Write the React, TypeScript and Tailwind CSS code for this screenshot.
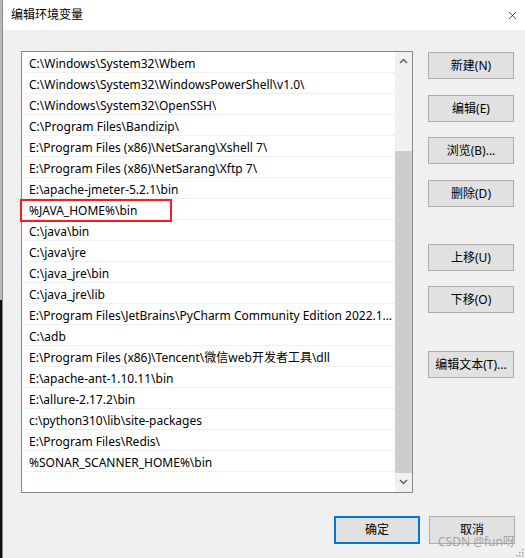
import { X } from 'lucide-react'

const paths = [
  'C:\\Windows\\System32\\Wbem',
  'C:\\Windows\\System32\\WindowsPowerShell\\v1.0\\',
  'C:\\Windows\\System32\\OpenSSH\\',
  'C:\\Program Files\\Bandizip\\',
  'E:\\Program Files (x86)\\NetSarang\\Xshell 7\\',
  'E:\\Program Files (x86)\\NetSarang\\Xftp 7\\',
  'E:\\apache-jmeter-5.2.1\\bin',
  '%JAVA_HOME%\\bin',
  'C:\\java\\bin',
  'C:\\java\\jre',
  'C:\\java_jre\\bin',
  'C:\\java_jre\\lib',
  'E:\\Program Files\\JetBrains\\PyCharm Community Edition 2022.1\\bin',
  'C:\\adb',
  'E:\\Program Files (x86)\\Tencent\\微信web开发者工具\\dll',
  'E:\\apache-ant-1.10.11\\bin',
  'E:\\allure-2.17.2\\bin',
  'c:\\python310\\lib\\site-packages',
  'E:\\Program Files\\Redis\\',
  '%SONAR_SCANNER_HOME%\\bin',
]

const font = 'font-["Noto_Sans","Noto_Sans_CJK_SC",sans-serif]'

function Btn({ label, className = '' }: { label: string; className?: string }) {
  return (
    <div
      className={`flex h-[27px] w-[86px] items-center justify-center border border-[#adadad] bg-[#e1e1e1] text-[12px] text-black ${className}`}
    >
      {label}
    </div>
  )
}

export default function App() {
  return (
    <div className={`relative flex h-[558px] w-[525px] overflow-hidden ${font}`}>
      {/* background behind the dialog */}
      <div className="flex w-[2px] flex-col">
        <div className="h-[300px] bg-[#b8b8b8]" />
        <div className="flex-1 bg-[#111]" />
      </div>

      <div className="flex flex-1 flex-col border-l border-[#8a8a8a] bg-[#f0f0f0]">
        <div className="flex h-[30px] items-center justify-between bg-white pl-[8px] pr-[6px]">
          <span className="text-[12px] text-black">编辑环境变量</span>
          <X size={13} strokeWidth={1.2} className="text-black" />
        </div>

        <div className="flex gap-[15px] pl-[18px] pt-[21px]">
          {/* list */}
          <div className="flex h-[442px] w-[392px] border border-[#828790] bg-white">
            <div className="flex w-[373px] flex-col">
              {paths.map((p) => (
                <div
                  key={p}
                  className="flex h-[21px] shrink-0 items-center border-b border-[#f0f0f0] pl-[7px] pr-[2px] text-[12px] text-black"
                >
                  <span className="truncate pt-[2px] leading-[19px]">{p}</span>
                </div>
              ))}
            </div>
            <div className="flex w-[17px] flex-col bg-[#f0f0f0]">
              <div className="flex h-[17px] items-center justify-center">
                <svg width="9" height="6" viewBox="0 0 9 6">
                  <path d="M1 5 L4.5 1.5 L8 5" fill="none" stroke="#606060" strokeWidth="1.5" />
                </svg>
              </div>
              <div className="h-[82px]" />
              <div className="h-[322px] bg-[#cdcdcd]" />
              <div className="flex h-[17px] items-center justify-center">
                <svg width="9" height="6" viewBox="0 0 9 6">
                  <path d="M1 1 L4.5 4.5 L8 1" fill="none" stroke="#606060" strokeWidth="1.5" />
                </svg>
              </div>
            </div>
          </div>

          {/* side buttons */}
          <div className="flex flex-col pt-px">
            <Btn label="新建(N)" />
            <Btn label="编辑(E)" className="mt-[16px]" />
            <Btn label="浏览(B)..." className="mt-[15px]" />
            <Btn label="删除(D)" className="mt-[16px]" />
            <Btn label="上移(U)" className="mt-[37px]" />
            <Btn label="下移(O)" className="mt-[15px]" />
            <Btn label="编辑文本(T)..." className="mt-[38px]" />
          </div>
        </div>

        <div className="flex justify-end gap-[9px] pr-[10px] pt-[23px]">
          <div className="flex h-[28px] w-[86px] items-center justify-center border-2 border-[#0078d7] bg-[#e1e1e1] text-[12px] text-black">
            确定
          </div>
          <Btn label="取消" className="h-[28px]" />
        </div>
      </div>

      {/* annotation */}
      <div className="absolute left-[20px] top-[199px] h-[23px] w-[152px] border-2 border-[#ff1a1a]" />

      {/* watermark */}
      <div className="absolute left-[438px] top-[533px] text-[12px] text-[#9a9a9a]/90">CSDN @fun呀</div>

      {/* resize grip */}
      <svg className="absolute bottom-[1px] right-[1px]" width="9" height="9" viewBox="0 0 9 9">
        {[
          [7, 1],
          [7, 4],
          [4, 4],
          [7, 7],
          [4, 7],
          [1, 7],
        ].map(([x, y]) => (
          <rect key={`${x}-${y}`} x={x} y={y} width="1.5" height="1.5" fill="#a0a0a0" />
        ))}
      </svg>
    </div>
  )
}
